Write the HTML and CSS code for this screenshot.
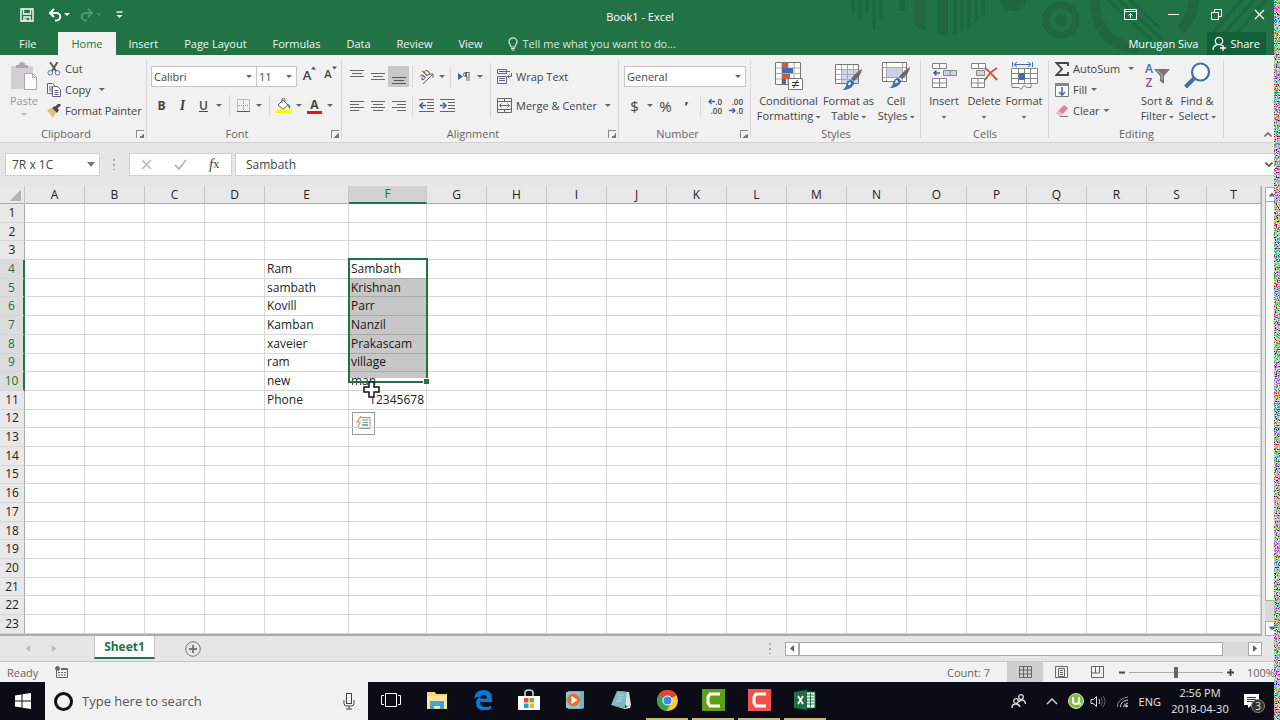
FILE: index.html
```html
<!DOCTYPE html>
<html lang="en">
<head>
<meta charset="UTF-8">
<meta name="viewport" content="width=device-width, initial-scale=1.0">
<title>Book1 - Excel</title>
<link rel="stylesheet" href="styles.css">
</head>
<body>
<div class="screen">

<header class="top">
    <svg class="deco" width="434" height="55" viewBox="0 0 434 55">
        <g stroke="#1e673f" fill="none">
            <path d="M13 0v15M20 0v21M27 0v13M34 0v30M41 0v18" stroke-width="3"/>
            <path d="M62 0v11" stroke-width="5"/>
            <path d="M115 0v34M122 0v32M129 0v28M136 0v22M143 0v15" stroke-width="3"/>
            <circle cx="221" cy="20" r="15" stroke-width="7"/>
            <path d="M255 0c0 28 14 46 42 48" stroke-width="10"/>
            <path d="M354 0c-1 14-6 22-14 30" stroke-width="10"/>
            <path d="M268 0l44 40M279 0l42 38M290 0l30 28M402 0l-30 34M414 0l-34 38M426 0l-30 34" stroke-width="3"/>
        </g>
        <g fill="#1e673f">
            <path d="M74 0h12v30q-9-1-12-7zM97 0h11v35q-8 1-11-2zM160 0h26q-2 11-13 11T160 0z"/>
            <circle cx="221" cy="20" r="6"/>
        </g>
    </svg>
    <div class="titlebar">
        <div class="quick">
            <button aria-label="Save"><svg width="14" height="14" viewBox="0 0 14 14" fill="none" stroke="#fff" stroke-width="1.4"><path d="M1 1h12v12H1zM3.500 1v5h7V1M4 13V9h6v4M6 10.500v2"/></svg></button>
            <button aria-label="Undo"><svg width="14" height="14" viewBox="0 0 14 14" fill="none" stroke="#fff" stroke-width="2"><path d="M2 5h6.500a3.700 3.700 0 0 1 0 7.500H7M6 1L2 5l4 4"/></svg></button>
            <i class="caret white"></i>
            <button class="off" aria-label="Redo"><svg width="14" height="14" viewBox="0 0 14 14" fill="none" stroke="#4f9a70" stroke-width="2"><path d="M12 5H5.500a3.700 3.700 0 0 0 0 7.500H7M8 1l4 4-4 4"/></svg></button>
            <i class="caret dim"></i>
            <button class="customize" aria-label="Customize"><svg width="7" height="8" viewBox="0 0 7 8"><path d="M0.500 1h6" stroke="#fff" stroke-width="1.300"/><path d="M0.500 4h6l-3 3z" fill="#fff"/></svg></button>
        </div>
        <span class="title">Book1 - Excel</span>
        <div class="winbtns">
            <button aria-label="Ribbon display"><svg width="13" height="11" viewBox="0 0 13 11" fill="none" stroke="#fff"><path d="M.5.5h12v10H.5zM.5 2.500h12M6.500 9V4.500M4.500 6.500l2-2 2 2"/></svg></button>
            <button aria-label="Minimize"><svg width="11" height="11" viewBox="0 0 11 11"><path d="M0 5.500h11" stroke="#fff"/></svg></button>
            <button aria-label="Restore"><svg width="11" height="11" viewBox="0 0 11 11" fill="none" stroke="#fff"><path d="M.5 3.500h7v7h-7zM3.500 3V.5h7v7H8"/></svg></button>
            <button aria-label="Close"><svg width="11" height="11" viewBox="0 0 11 11"><path d="M1 1l9 9M10 1l-9 9" stroke="#fff" stroke-width="1.200"/></svg></button>
        </div>
    </div>
    <nav class="tabs">
        <a href="#" class="file">File</a>
        <a href="#" class="active">Home</a>
        <a href="#">Insert</a>
        <a href="#">Page Layout</a>
        <a href="#">Formulas</a>
        <a href="#">Data</a>
        <a href="#">Review</a>
        <a href="#">View</a>
        <button class="tellme"><svg width="10" height="14" viewBox="0 0 10 14" fill="none" stroke="#d5eadf" stroke-width="1.200"><path d="M3 10C3 8 1 7 1 4.800a4 4 0 0 1 8 0C9 7 7 8 7 10zM3 11.500h4M3.500 13h3"/></svg>Tell me what you want to do...</button>
        <span class="user">Murugan Siva</span>
        <button class="share"><svg width="15" height="15" viewBox="0 0 15 15" fill="none" stroke="#fff" stroke-width="1.300"><circle cx="7" cy="5" r="3.700"/><path d="M1 14c0-3 2-5 5-5.300M8 8.500l2 1M11 9v6M8 12h6"/></svg>Share</button>
    </nav>
</header>

<section class="ribbon">
    <div class="group clipboard">
        <div class="body">
            <button class="big paste"><svg width="28" height="28" viewBox="0 0 28 28"><path d="M1 4h22v23H1z" fill="#d2d0d3"/><path d="M6 6V3h3a3 3 0 0 1 6 0h3v3z" fill="#aaa"/><path d="M14.500 11.500h8l4 4v12h-12z" fill="#fff" stroke="#aaa"/><path d="M22.500 11.500v4h4" fill="none" stroke="#aaa"/></svg><span>Paste</span><i class="caret pale"></i></button>
            <div class="stack">
                <button class="item"><svg width="14" height="14" viewBox="0 0 14 14" fill="none"><path d="M3 0l6 9M10.500 0L5 9" stroke="#555" stroke-width="1.800"/><circle cx="3.300" cy="10.800" r="2.300" stroke="#4a76b0"/><circle cx="10.500" cy="10.800" r="2.300" stroke="#4a76b0"/></svg>Cut</button>
                <button class="item"><svg width="14" height="14" viewBox="0 0 14 14" fill="#fff" stroke="#60637d"><path d="M.5.500h5l2 2v8h-7zM2 4h3M2 6h3M2 8h3"/><path d="M5.500 3.500h5l3 3v7h-8zM7.500 7.500h4M7.500 9.500h4M7.500 11.500h4"/></svg>Copy<i class="caret gap"></i></button>
                <button class="item"><svg width="14" height="14" viewBox="0 0 14 14"><path d="M0 6l5-2 4 4-3 6z" fill="#e5bd79"/><path d="M5 4l3-2 4 4-2 3z" fill="#4a4a4a"/><path d="M9 4l4-4" stroke="#4a4a4a" stroke-width="3"/></svg>Format Painter</button>
            </div>
        </div>
        <div class="label"><span>Clipboard</span><button class="launch" aria-label="Clipboard settings"></button></div>
    </div>

    <div class="group font">
        <div class="body rows">
            <div class="row">
                <button class="combo fontname">Calibri<i class="caret"></i></button>
                <button class="combo fontsize">11<i class="caret"></i></button>
                <button class="tool grow" aria-label="Increase font size"><b>A</b><svg width="5" height="4" viewBox="0 0 5 4"><path d="M0 3.500h5L2.500.5z" fill="#44546a"/></svg></button>
                <button class="tool shrink" aria-label="Decrease font size"><b>A</b><svg width="5" height="4" viewBox="0 0 5 4"><path d="M0 .5h5L2.500 3.500z" fill="#44546a"/></svg></button>
            </div>
            <div class="row">
                <button class="tool"><b>B</b></button>
                <button class="tool serif"><em>I</em></button>
                <button class="tool under"><u>U</u></button>
                <i class="caret"></i>
                <i class="sep"></i>
                <button class="tool" aria-label="Borders"><svg width="13" height="13" viewBox="0 0 13 13" fill="none" stroke="#8a8a8a"><path d="M.5.500h12v12H.500zM6.500 0v12M0 6.500h12" stroke-dasharray="1 1"/><path d="M0 12.500h13" stroke="#555"/></svg></button>
                <i class="caret"></i>
                <i class="sep"></i>
                <button class="tool" aria-label="Fill color"><svg width="16" height="15" viewBox="0 0 16 15"><path d="M2 7l5-5 5 5-5 4z" fill="#fff" stroke="#666"/><path d="M6 5V1q1.500-1.500 3 0v3" fill="none" stroke="#666"/><path d="M12 6q3 1 2 5-2-1-2-5z" fill="#4a76b0"/><path d="M0 12h15v3H0z" fill="#ff0"/></svg></button>
                <i class="caret"></i>
                <button class="tool fontcolor" aria-label="Font color"><b>A</b></button>
                <i class="caret"></i>
            </div>
        </div>
        <div class="label"><span>Font</span><button class="launch" aria-label="Font settings"></button></div>
    </div>

    <div class="group alignment">
        <div class="body">
            <div class="rows">
                <div class="row">
                    <button class="tool" aria-label="Top align"><svg width="14" height="14" viewBox="0 0 14 14" stroke="#666"><path d="M0 .5h14M2 3.500h10M0 6.500h14"/></svg></button>
                    <button class="tool" aria-label="Middle align"><svg width="14" height="14" viewBox="0 0 14 14" stroke="#666"><path d="M0 3.500h14M2 6.500h10M0 9.500h14"/></svg></button>
                    <button class="tool pressed" aria-label="Bottom align"><svg width="14" height="14" viewBox="0 0 14 14" stroke="#555"><path d="M0 7.500h14M2 10.500h10M0 13.500h14"/></svg></button>
                    <i class="sep"></i>
                    <button class="tool orient" aria-label="Orientation"><span>ab</span><svg width="16" height="16" viewBox="0 0 16 16" fill="none" stroke="#666"><path d="M4 15L14 5M10 5h4v4"/></svg></button>
                    <i class="caret"></i>
                    <i class="sep"></i>
                    <button class="tool" aria-label="Text direction"><svg width="13" height="10" viewBox="0 0 13 10"><path d="M0 1l5 3.500L0 8z" fill="#4a5fa5"/><path d="M11 .5H7.500a2 2 0 0 0 0 4H9v4.500M11 0v9" fill="none" stroke="#666"/><path d="M7 1h2v3H7z" fill="#666"/></svg></button>
                    <i class="caret"></i>
                </div>
                <div class="row">
                    <button class="tool" aria-label="Align left"><svg width="14" height="12" viewBox="0 0 14 12" stroke="#666"><path d="M0 1.500h14M0 4.500h9M0 7.500h14M0 10.500h9"/></svg></button>
                    <button class="tool" aria-label="Center"><svg width="14" height="12" viewBox="0 0 14 12" stroke="#666"><path d="M0 1.500h14M2 4.500h10M0 7.500h14M2 10.500h10"/></svg></button>
                    <button class="tool" aria-label="Align right"><svg width="14" height="12" viewBox="0 0 14 12" stroke="#666"><path d="M0 1.500h14M5 4.500h9M0 7.500h14M5 10.500h9"/></svg></button>
                    <i class="sep"></i>
                    <button class="tool" aria-label="Decrease indent"><svg width="15" height="13" viewBox="0 0 15 13" stroke="#666" fill="none"><path d="M0 .5h15M8 3.500h7M8 6.500h7M8 9.500h7M0 12.500h15"/><path d="M7 6.500H1M4 3.500l-3 3 3 3" stroke="#3f62a8" stroke-width="1.600"/></svg></button>
                    <button class="tool" aria-label="Increase indent"><svg width="15" height="13" viewBox="0 0 15 13" stroke="#666" fill="none"><path d="M0 .5h15M8 3.500h7M8 6.500h7M8 9.500h7M0 12.500h15"/><path d="M0 6.500h6M3 3.500l3 3-3 3" stroke="#3f62a8" stroke-width="1.600"/></svg></button>
                </div>
            </div>
            <i class="sep tall"></i>
            <div class="rows">
                <div class="row">
                    <button class="item"><svg width="15" height="15" viewBox="0 0 15 15" fill="none" stroke="#60637d"><path d="M.5.500h9v4h-9zM.5 7.500h9v7h-9zM2 2.500h11M2 9.500h6M2 11.500h6M14.500 4v3.500H10.500M12.500 5.500l-2 2 2 2"/></svg>Wrap Text</button>
                </div>
                <div class="row">
                    <button class="item"><svg width="15" height="15" viewBox="0 0 15 15" fill="none" stroke="#666"><path d="M.5.500h14v14H.500zM.5 3.500h14M.5 11.500h14M7.500 0v3.500M7.500 11.500V15M2.500 7.500h10M4.500 5.500l-2 2 2 2M10.500 5.500l2 2-2 2"/></svg>Merge &amp; Center<i class="caret gap"></i></button>
                </div>
            </div>
        </div>
        <div class="label"><span>Alignment</span><button class="launch" aria-label="Alignment settings"></button></div>
    </div>

    <div class="group number">
        <div class="body rows">
            <div class="row"><button class="combo format">General<i class="caret"></i></button></div>
            <div class="row">
                <button class="tool sign">$</button>
                <i class="caret"></i>
                <button class="tool sign">%</button>
                <button class="tool sign comma"><b>&#8217;</b></button>
                <i class="sep"></i>
                <button class="tool dec" aria-label="Increase decimal"><span><svg width="7" height="7" viewBox="0 0 7 7"><path d="M7 3.500H1M3.500 1L1 3.500 3.500 6" fill="none" stroke="#3f62a8" stroke-width="1.300"/></svg>.0</span><span>.00</span></button>
                <button class="tool dec" aria-label="Decrease decimal"><span>.00</span><span><svg width="7" height="7" viewBox="0 0 7 7"><path d="M0 3.500h6M3.500 1L6 3.500 3.500 6" fill="none" stroke="#3f62a8" stroke-width="1.300"/></svg>.0</span></button>
            </div>
        </div>
        <div class="label"><span>Number</span><button class="launch" aria-label="Number settings"></button></div>
    </div>

    <div class="group styles">
        <div class="body">
            <button class="big w65"><svg width="28" height="28" viewBox="0 0 28 28"><path d="M.5.500h25v22H.500z" fill="#fff" stroke="#777"/><path d="M7 1v21M13 1v21M19 1v21M1 6h24M1 11.500h24M1 17h24" stroke="#aaa"/><path d="M7 1h6v5H7zM7 12h8v5H7z" fill="#d2573c"/><path d="M7 6h11v5H7zM7 17h4v5H7z" fill="#3c6fb0"/><path d="M13.500 16.500h14v11h-14z" fill="#fff" stroke="#777"/><path d="M17 20.500h7M17 23.500h7M22.500 18l-4 8" stroke="#333"/></svg><span>Conditional<br>Formatting <i class="caret"></i></span></button>
            <button class="big w55"><svg width="28" height="28" viewBox="0 0 28 28"><path d="M.5 2.500h23v19H.500z" fill="#fff" stroke="#777"/><path d="M7 7h16v14H7z" fill="#cfd6e6"/><path d="M6.500 3v18M12.500 3v18M18.500 3v18M1 7.500h22M1 12.500h22M1 17.500h22" stroke="#aaa"/><path d="M27 7q-1 7-8 12l-3-2q5-7 11-10z" fill="#6b6b6b"/><path d="M15 18q4 0 4 4-3 6-12 6 4-2 4-5 1-4 4-5z" fill="#3c6fb0"/><path d="M14 20q2 0 2 2-2 2-3 1z" fill="#fff"/></svg><span>Format as<br>Table <i class="caret"></i></span></button>
            <button class="big w40"><svg width="28" height="28" viewBox="0 0 28 28"><path d="M.5.500h24v19H.500z" fill="#fff" stroke="#777"/><path d="M4.500 1v18M20.500 1v18M1 5.500h23M1 15.500h23" stroke="#aaa"/><path d="M5 6h15v9H5z" fill="#c9d2e8"/><path d="M28 5q-1 7-8 12l-3-2q5-7 11-10z" fill="#6b6b6b"/><path d="M15 16q4 0 4 4-3 6-12 6 4-2 4-5 1-4 4-5z" fill="#3c6fb0"/><path d="M14 18q2 0 2 2-2 2-3 1z" fill="#fff"/></svg><span>Cell<br>Styles <i class="caret"></i></span></button>
        </div>
        <div class="label"><span>Styles</span></div>
    </div>

    <div class="group cells">
        <div class="body">
            <button class="big w40"><svg width="28" height="28" viewBox="0 0 28 28" fill="#fff" stroke="#858585"><path d="M2.500 1.500h14v5h-14zM9.500 1.500v5M2.500 16.500h14v9h-14zM9.500 16.500v9M2.500 21h14"/><path d="M13.500 8.500h13v5h-13zM20 8.500v5" fill="#ccd3e8"/><path d="M10 11H4M6.500 8.500L4 11l2.500 2.500" fill="none" stroke="#3f62a8" stroke-width="1.600"/></svg><span>Insert<br><i class="caret"></i></span></button>
            <button class="big w40"><svg width="28" height="28" viewBox="0 0 28 28" fill="#fff" stroke="#858585"><path d="M1.500 1.500h14v5h-14zM8.500 1.500v5M1.500 16.500h13v9h-13zM8 16.500v9M1.500 21h13"/><path d="M6.500 8.500h8v5h-8z" fill="#ccd3e8"/><path d="M15 6q5 4 12 12M27 6q-7 4-12 12" fill="none" stroke="#dc5140" stroke-width="2"/></svg><span>Delete<br><i class="caret"></i></span></button>
            <button class="big w40"><svg width="28" height="28" viewBox="0 0 28 28" fill="none" stroke="#858585"><path d="M2.500 0v5M22.500 0v5M4 2.500h17M7 0L4 2.500 7 5M18 0l3 2.500L18 5" stroke="#3c6fb0"/><path d="M1.500 6.500h26v15h-26zM1.500 11.500h26M1.500 16.500h26M8.500 6.500v15M14.500 6.500v15M20.500 6.500v15" fill="#fff"/><path d="M9 11h6v7H9z" fill="#3c6fb0" stroke="none"/><path d="M2 21.500v4h7l2 2 3-4 3 2h4v-4"/></svg><span>Format<br><i class="caret"></i></span></button>
        </div>
        <div class="label"><span>Cells</span></div>
    </div>

    <div class="group editing">
        <div class="body">
            <div class="stack">
                <button class="item"><svg width="14" height="14" viewBox="0 0 14 14"><path d="M13 4V1H1.500l5.500 6-5.500 6H13v-3" fill="none" stroke="#444" stroke-width="1.800"/></svg>AutoSum<i class="caret gap"></i></button>
                <button class="item"><svg width="14" height="14" viewBox="0 0 14 14" fill="none"><path d="M.5.500h13v13H.500z" fill="#fff" stroke="#777"/><path d="M0 0h14v3H0z" fill="#888"/><path d="M7 4v8M4 9l3 3 3-3" stroke="#3c6fb0" stroke-width="1.600"/></svg>Fill<i class="caret near"></i></button>
                <button class="item"><svg width="14" height="14" viewBox="0 0 14 14"><path d="M3 7l6-6 4 3-5 6z" fill="#e87f9c"/><path d="M3 7l5 3-2 2H4L1 9z" fill="#f5b5c6"/><path d="M5 12.500h8" stroke="#777"/></svg>Clear<i class="caret near"></i></button>
            </div>
            <button class="big w40 sort"><span class="az"><b>A</b><b>Z</b></span><svg width="16" height="28" viewBox="0 0 16 28"><path d="M0 7h16l-6 7v8l-4-3v-5z" fill="#777"/><path d="M3 8l5 5v5" fill="none" stroke="#bbb"/></svg><span>Sort &amp;<br>Filter <i class="caret"></i></span></button>
            <button class="big w40"><svg width="28" height="28" viewBox="0 0 28 28" fill="none" stroke="#3c6fb0"><circle cx="17.500" cy="10" r="8.500" fill="#fff" stroke-width="2.200"/><path d="M11 16.500L2.500 25" stroke-width="4"/></svg><span>Find &amp;<br>Select <i class="caret"></i></span></button>
        </div>
        <div class="label"><span>Editing</span></div>
    </div>
    <button class="collapse" aria-label="Collapse the ribbon"><svg width="8" height="5" viewBox="0 0 8 5"><path d="M.5 4.500L4 1l3.500 3.500" fill="none" stroke="#555" stroke-width="1.400"/></svg></button>
</section>

<section class="formulabar">
    <button class="namebox">7R x 1C<i class="caret large"></i></button>
    <i class="grip"></i>
    <div class="fx">
        <button aria-label="Cancel"><svg width="11" height="11" viewBox="0 0 11 11"><path d="M1 1l9 9M10 1l-9 9" stroke="#bbb" stroke-width="1.600"/></svg></button>
        <button aria-label="Enter"><svg width="13" height="11" viewBox="0 0 13 11"><path d="M1 6l4 4 7-9" fill="none" stroke="#bbb" stroke-width="2"/></svg></button>
        <button class="fn"><em>f</em><small>x</small></button>
    </div>
    <input class="formula" type="text" value="Sambath" aria-label="Formula bar">
    <button class="expand" aria-label="Expand formula bar"><svg width="8" height="5" viewBox="0 0 8 5"><path d="M.5.500L4 4 7.500.500" fill="none" stroke="#555" stroke-width="1.600"/></svg></button>
</section>

<main class="sheet">
    <div class="gridwrap">
        <table id="grid"></table>
    </div>
    <div class="vscroll">
        <button aria-label="Scroll up"><i class="tri up"></i></button>
        <div class="thumb"></div>
        <div class="track"></div>
        <button aria-label="Scroll down"><i class="tri down"></i></button>
    </div>
</main>

<footer class="sheettabs">
    <button class="nav" aria-label="Previous sheet"><i class="tri left pale"></i></button>
    <button class="nav" aria-label="Next sheet"><i class="tri right pale"></i></button>
    <button class="sheettab">Sheet1</button>
    <button class="add" aria-label="New sheet"><svg width="16" height="16" viewBox="0 0 16 16" fill="none" stroke="#777"><circle cx="8" cy="8" r="7.300"/><path d="M8 4v8M4 8h8" stroke-width="1.800"/></svg></button>
    <i class="grip"></i>
    <div class="hscroll">
        <button aria-label="Scroll left"><i class="tri left"></i></button>
        <div class="thumb"></div>
        <div class="track"></div>
        <button aria-label="Scroll right"><i class="tri right"></i></button>
    </div>
</footer>

<div class="status">
    <span>Ready</span>
    <svg class="macro" width="13" height="12" viewBox="0 0 13 12" fill="none" stroke="#666"><path d="M1.500 4v7.500h11v-9H6"/><path d="M3 6.500h9M3 9h9" stroke-dasharray="2 1"/><path d="M6 3h6" stroke-width="2"/><circle cx="2.500" cy="2.500" r="2" fill="#666"/></svg>
    <span class="count">Count: 7</span>
    <button class="view on" aria-label="Normal"><svg width="13" height="12" viewBox="0 0 13 12" fill="none" stroke="#666"><path d="M.5.500h12v11H.500zM4.500 0v12M8.500 0v12M0 4h13M0 8h13"/></svg></button>
    <button class="view" aria-label="Page layout"><svg width="13" height="12" viewBox="0 0 13 12" fill="none" stroke="#666"><path d="M.5.500h12v11H.500zM3.500 2.500h6v8h-6zM5 4.500h3M5 6.500h3M5 8.500h3"/></svg></button>
    <button class="view" aria-label="Page break"><svg width="13" height="12" viewBox="0 0 13 12" fill="none" stroke="#666"><path d="M.5.500h12v11H.500zM4.500 0v7M8.500 0v7H.500"/></svg></button>
    <button class="zoombtn" aria-label="Zoom out"><svg width="7" height="7" viewBox="0 0 7 7"><path d="M0 3.500h6" stroke="#444" stroke-width="2"/></svg></button>
    <input class="zoom" type="range" min="10" max="190" value="100" aria-label="Zoom">
    <button class="zoombtn" aria-label="Zoom in"><svg width="7" height="7" viewBox="0 0 7 7"><path d="M0 3.500h7M3.500 0v7" stroke="#444" stroke-width="1.800"/></svg></button>
    <span class="pct">100%</span>
</div>

<div class="taskbar">
    <button class="start" aria-label="Start"><svg width="16" height="16" viewBox="0 0 16 16" fill="#fff"><path d="M0 2.500l6.500-1v6H0zM7.500 1.300L16 0v7.500H7.500zM0 8.500h6.500v6L0 13.500zM7.500 8.500H16V16l-8.500-1.200z"/></svg></button>
    <div class="search">
        <i class="cortana"></i>
        <input type="text" placeholder="Type here to search" aria-label="Search">
        <svg width="12" height="17" viewBox="0 0 12 17" fill="none" stroke="#444"><rect x="3.500" y=".5" width="5" height="10"/><path d="M1 7v3.500q0 2.500 3 2.500h4q3 0 3-2.500V7M6 13v3M3 16h6"/></svg>
    </div>
    <div class="apps">
        <button aria-label="Task view"><svg width="20" height="16" viewBox="0 0 20 16" fill="none" stroke="#fff"><path d="M4.500 1.500h11v13h-11zM3 3.500H.500v9H3M17 3.500h2.500v9H17"/></svg></button>
        <button aria-label="File Explorer"><svg width="22" height="20" viewBox="0 0 22 20"><path d="M1 2h8l1 2h11v15H1z" fill="#f4d780"/><path d="M1 6h20v12H1z" fill="#fbe69a"/><path d="M4 11h14v8h-4v-3H8v3H4z" fill="#42a5d8"/></svg></button>
        <button aria-label="Edge"><svg width="20" height="20" viewBox="0 0 20 20"><path d="M1 9Q2 0 10.500 0 19 0 19 9v3H7q0 5 6 5 3 0 5-1.500v3.500q-3 1.500-6.500 1.500Q3 20 3 13q0-4 4-6-5 0-6 2zM7.500 8.500H14Q14 5 10.500 5T7.500 8.500z" fill="#0a78d6"/></svg></button>
        <button aria-label="Store"><svg width="22" height="22" viewBox="0 0 22 22"><path d="M0 7h22v13q0 1-1 1H1q-1 0-1-1z" fill="#fff"/><path d="M7 7V4q0-3 4-3t4 3v3" fill="none" stroke="#ddd" stroke-width="1.500"/><path d="M6 9h4.500v4.500H6z" fill="#e5512c"/><path d="M11.500 9H16v4.500h-4.500z" fill="#7cb518"/><path d="M6 14.500h4.500V19H6z" fill="#219fd9"/><path d="M11.500 14.500H16V19h-4.500z" fill="#f6b70d"/></svg></button>
        <button aria-label="Media player"><svg width="20" height="20" viewBox="0 0 20 20"><path d="M3 1h16v17l-2 1H3z" fill="#74b0cc"/><path d="M1 2h14v16H1z" fill="#9cc3d5"/><circle cx="8.500" cy="10" r="6.500" fill="#e2742a"/><path d="M6.500 6l6 4-6 4z" fill="#fff"/></svg></button>
        <button aria-label="Notepad"><svg width="22" height="20" viewBox="0 0 22 20"><path d="M7 1l12 1 2 13-4 2z" fill="#d5e3e4"/><path d="M7 1l10 1-2 16L1 15z" fill="#7fb9c0"/><path d="M1 15l14 3 6-3-1 3-5 1z" fill="#e8eeee"/><path d="M8 5h6M7 8h6M6 11h6" stroke="#b7dde0"/></svg></button>
        <button class="open" aria-label="Chrome"><svg width="21" height="21" viewBox="0 0 21 21"><circle cx="10.500" cy="10.500" r="10.500" fill="#f5cc3a"/><path d="M10.500 10.500L1.400 5.200a10.500 10.500 0 0 1 18.200 0z" fill="#e04638"/><path d="M10.500 10.500L1.400 5.200A10.500 10.500 0 0 0 9.500 21l4-7z" fill="#35a353"/><circle cx="10.500" cy="10.500" r="5" fill="#fff"/><circle cx="10.500" cy="10.500" r="4" fill="#4583ee"/></svg></button>
        <button class="open" aria-label="Camtasia"><svg width="23" height="22" viewBox="0 0 23 22"><path d="M0 0h23v22H0z" fill="#5fa012"/><path d="M18 5H8L6 8v6l2 3h10" fill="none" stroke="#fff" stroke-width="3"/></svg></button>
        <button class="open" aria-label="Camtasia Recorder"><svg width="23" height="22" viewBox="0 0 23 22"><path d="M0 0h23v22H0z" fill="#f0514b"/><path d="M18 5H8L6 8v6l2 3h10" fill="none" stroke="#fff" stroke-width="3"/></svg></button>
        <button class="open" aria-label="Excel"><svg width="22" height="20" viewBox="0 0 22 20"><path d="M11 2h10v16H11z" fill="#fff" stroke="#1f7145"/><path d="M13 5h7M13 8h7M13 11h7M13 14h7M16.500 3v14" stroke="#1f7145"/><path d="M0 2l13-2v20L0 18z" fill="#1f7145"/><path d="M4 6l5 8M9 6l-5 8" stroke="#fff" stroke-width="1.800"/></svg></button>
    </div>
    <div class="tray">
        <svg width="15" height="15" viewBox="0 0 15 15" fill="none" stroke="#ddd" stroke-width="1.300"><circle cx="10" cy="3" r="2.300"/><circle cx="5" cy="7" r="2.300"/><path d="M1 14q0-4 4-4 3 0 4 3M8 8q1-2 3-2 3 0 3.500 4"/></svg>
        <svg class="chev" width="12" height="7" viewBox="0 0 12 7"><path d="M1 6l5-5 5 5" fill="none" stroke="#ddd" stroke-width="1.400"/></svg>
        <svg class="torrent" width="16" height="16" viewBox="0 0 16 16"><circle cx="8" cy="8" r="7.500" fill="#7cc142" stroke="#cfe5c0"/><path d="M5 4v4q0 3 3 3t3-3V4M11 9q0 2 2 2" fill="none" stroke="#fff" stroke-width="2"/></svg>
        <svg width="16" height="13" viewBox="0 0 16 13" fill="none" stroke="#ddd"><path d="M1 4.500h2.500l3-3v10l-3-3H1z"/><path d="M9 4q1.500 2.500 0 5"/><path d="M11 2.500q3 4 0 8M13 1q4 5.500 0 11" stroke="#666"/></svg>
        <svg width="13" height="13" viewBox="0 0 13 13" fill="none" stroke="#ccc"><path d="M7.500 12q0-3 4.500-4M4.500 12q0-6 7.500-7"/><path d="M1.500 12Q1 4 12 2" stroke="#888"/><circle cx="10.500" cy="11" r="1" fill="#ccc"/></svg>
        <span class="lang">ENG</span>
        <div class="clock">2:56 PM<br>2018-04-30</div>
        <div class="notif"><svg width="16" height="16" viewBox="0 0 16 16"><path d="M0 1h15v11H8l-4 3v-3H0z" fill="#fff"/><path d="M3 4.500h9M3 6.500h9M3 8.500h6" stroke="#333"/></svg><span class="badge">3</span></div>
    </div>
</div>
</div>

<svg class="noise" aria-hidden="true">
    <filter id="static" x="0" y="0" width="100%" height="100%">
        <feTurbulence type="fractalNoise" baseFrequency="0.83" numOctaves="3" seed="4"/>
        <feColorMatrix values="3 0 0 0 -1  0 3 0 0 -1  0 0 3 0 -1  0 0 0 0 1"/>
    </filter>
    <rect width="100%" height="100%" filter="url(#static)"/>
</svg>

<script>
    const cols = 'ABCDEFGHIJKLMNOPQRST'.split('');
    const data = {
        E4: 'Ram', E5: 'sambath', E6: 'Kovill', E7: 'Kamban', E8: 'xaveier', E9: 'ram', E10: 'new', E11: 'Phone',
        F4: 'Sambath', F5: 'Krishnan', F6: 'Parr', F7: 'Nanzil', F8: 'Prakascam', F9: 'village', F10: 'man', F11: '12345678'
    };

    let html = '<colgroup><col class="rowhead">';
    cols.forEach(c => {
        html += '<col class="' + (c === 'E' ? 'c84' : c === 'F' ? 'c78' : c === 'T' ? '' : 'c60') + '">';
    });
    html += '</colgroup><thead><tr><th class="corner"></th>';
    cols.forEach(c => html += '<th' + (c === 'F' ? ' class="sel"' : '') + '>' + c + '</th>');
    html += '</tr></thead><tbody>';

    for (let r = 1; r <= 23; r++) {
        html += '<tr><th' + (r >= 4 && r <= 10 ? ' class="sel"' : '') + '>' + r + '</th>';
        cols.forEach(c => {
            const id = c + r;
            const num = data[id] && !isNaN(data[id]);
            html += '<td' + (num ? ' class="num"' : '') + '>' + (data[id] || '');
            // selection frame, mouse pointer and quick analysis button hang off these cells
            if (id === 'F4') html += '<div class="selection"><i class="handle"></i></div>';
            if (id === 'F10') html += '<svg class="cursor" width="17" height="17" viewBox="0 0 17 17"><path d="M6 1h5v5h5v5h-5v5H6v-5H1V6h5z" fill="#fff" stroke="#111" stroke-width="1.500"/></svg>';
            if (id === 'F11') html += '<button class="quickbtn" aria-label="Quick analysis"><svg width="15" height="14" viewBox="0 0 15 14" fill="none"><path d="M4 1.500h10v11H3" stroke="#999"/><path d="M6 4h6M7 6.500h5" stroke="#888"/><path d="M6 9h6" stroke="#3aa79b" stroke-width="1.500"/><path d="M5 0L1 6h3l-2 5" stroke="#eba078" stroke-width="1.500"/></svg></button>';
            html += '</td>';
        });
        html += '</tr>';
    }
    document.getElementById('grid').innerHTML = html + '</tbody>';
</script>
</body>
</html>
```
FILE: styles.css
```css
* {
    box-sizing: border-box;
}
body {
    margin: 0;
    height: 100vh;
    display: flex;
    overflow: hidden;
    font-family: "Open Sans", "Noto Sans", sans-serif;
    font-size: 11px;
    color: #444;
}
button {
    font: inherit;
    color: inherit;
    background: none;
    border: 0;
    padding: 0;
    margin: 0;
    display: flex;
    align-items: center;
    justify-content: center;
    white-space: nowrap;
}
input {
    font: inherit;
    color: inherit;
    border: 0;
    padding: 0;
    margin: 0;
    min-width: 0;
}
svg {
    display: block;
    flex: none;
}
.screen {
    flex: 1;
    min-width: 0;
    display: flex;
    flex-direction: column;
    overflow: hidden;
    background: #e6e6e6;
}
.noise {
    width: 6px;
    height: 100%;
}

/* small arrows */
.caret {
    width: 10px;
    height: 3px;
    flex: none;
    display: inline-block;
    background: #666;
    clip-path: polygon(20% 0, 80% 0, 50% 100%);
}
.caret.white { background: #fff; }
.caret.dim { background: #3f8a61; }
.caret.pale { background: #bbb; }
.caret.gap { margin-left: 2px; }
.caret.near { margin-left: -2px; }
.caret.large {
    height: 5px;
    clip-path: polygon(10% 0, 90% 0, 50% 100%);
}
.tri {
    width: 7px;
    height: 7px;
    background: #666;
}
.tri.up { clip-path: polygon(0 80%, 100% 80%, 50% 20%); }
.tri.down { clip-path: polygon(0 20%, 100% 20%, 50% 80%); }
.tri.left { clip-path: polygon(80% 0, 80% 100%, 20% 50%); }
.tri.right { clip-path: polygon(20% 0, 20% 100%, 80% 50%); }
.tri.pale { background: #bbb; }

/* title bar */
.top {
    position: relative;
    background: #217346;
    color: #fff;
}
.deco {
    position: absolute;
    right: 0;
    top: 0;
}
.titlebar {
    position: relative;
    height: 32px;
    display: flex;
    align-items: center;
    justify-content: space-between;
    padding-bottom: 3px;
}
.quick {
    display: flex;
    align-items: center;
    flex: 1;
    padding-left: 20px;
}
.quick .off { margin-left: 8px; }
.quick button + button { margin-left: 14px; }
.quick .customize { margin-left: 12px; }
.title {
    padding: 3px 14px 0 0;
}
.winbtns {
    flex: 1;
    display: flex;
    justify-content: flex-end;
}
.winbtns button {
    width: 43px;
}
.winbtns button:last-child {
    margin-right: -7px;
}
.tabs {
    position: relative;
    height: 23px;
    display: flex;
    align-items: stretch;
}
.tabs a {
    color: #f0f6f2;
    text-decoration: none;
    padding: 0 13px;
    line-height: 23px;
}
.tabs .file { padding: 0 22px 0 19px; }
.tabs .active {
    background: #f1f1f1;
    color: #217346;
}
.tellme {
    margin-left: 12px;
    gap: 5px;
    color: #d5eadf;
}
.user {
    margin-left: auto;
    line-height: 23px;
}
.share {
    background: #12603a;
    margin: 0 8px 0 9px;
    padding: 0 6px 0 5px;
    gap: 3px;
}

/* ribbon */
.ribbon {
    display: flex;
    background: #f1f1f1;
    border-bottom: 1px solid #d2d2d2;
}
.group {
    display: flex;
    flex-direction: column;
    padding-top: 3px;
    flex: none;
    position: relative;
}
.group::after {
    content: "";
    position: absolute;
    right: 0;
    top: 5px;
    bottom: 4px;
    width: 1px;
    background: #d8d8d8;
}
.clipboard { width: 147px; }
.font { width: 195px; }
.alignment { width: 277px; }
.number { width: 132px; }
.styles { width: 170px; }
.cells { width: 128px; }
.editing { width: 175px; }
.body {
    display: flex;
    height: 67px;
    padding-left: 4px;
}
.styles .body { padding-left: 5px; }
.cells .body { padding-left: 3px; }
.label {
    display: flex;
    height: 17px;
    line-height: 17px;
    text-align: center;
    color: #666;
}
.label span {
    flex: 1;
}
.launch {
    width: 8px;
    height: 8px;
    margin: 5px 3px 0 4px;
    border: 1px solid #888;
    border-right: 0;
    border-bottom: 0;
    background: linear-gradient(135deg, transparent 50%, #777 50%) 2px 2px / 5px 5px no-repeat;
}
.rows {
    display: flex;
    flex-direction: column;
    padding-top: 4px;
}
.body.rows { padding-left: 4px; }
.number .body.rows { padding-left: 5px; }
.row {
    display: flex;
    align-items: center;
    height: 29px;
}
.stack {
    display: flex;
    flex-direction: column;
}
.item {
    height: 21px;
    gap: 4px;
    justify-content: flex-start;
}
.tool {
    width: 21px;
    height: 21px;
    flex: none;
    font-size: 12px;
}
.tool.serif {
    font-family: "Liberation Serif", serif;
    font-size: 14px;
    font-weight: bold;
}
.under { font-weight: 600; }
.pressed { background: #c8c8c8; }
.sep {
    width: 1px;
    height: 22px;
    background: #dadada;
    margin: 0 3px 0 5px;
}
.alignment .sep { margin: 0 3px; }
.alignment .sep.tall {
    height: 56px;
    margin: 5px 6px 0 5px;
}
.combo {
    height: 21px;
    background: #fff;
    border: 1px solid #c6c6c6;
    padding: 0 2px;
    justify-content: space-between;
}
.fontname { width: 106px; }
.fontsize {
    width: 41px;
    margin-left: -1px;
}
.format { width: 122px; }
.grow, .shrink {
    align-items: flex-start;
}
.grow {
    margin-left: 2px;
    font-size: 13px;
}
.shrink { font-size: 11px; }
.grow b, .shrink b { font-weight: 600; }
.fontcolor b {
    line-height: 13px;
    border-bottom: 3px solid #e11;
    padding: 0 3px;
}
.orient { position: relative; }
.orient span {
    position: absolute;
    left: 2px;
    top: 1px;
    font-size: 10px;
    line-height: 14px;
    rotate: -45deg;
}
.sign { font-size: 15px; }
.dec {
    flex-direction: column;
    align-items: flex-end;
    padding-right: 3px;
    font-size: 8px;
    line-height: 9px;
    font-weight: 600;
}
.dec span {
    display: flex;
    align-items: center;
}
.number .sep { margin: 0 3px; }
.big {
    flex-direction: column;
    justify-content: flex-start;
    padding-top: 4px;
    line-height: 15px;
    text-align: center;
}
.big svg { margin-bottom: 3px; }
.big .caret {
    vertical-align: middle;
    margin: 0 -3px;
}
.w65 { width: 65px; }
.w55 { width: 55px; }
.w40 { width: 40px; }
.clipboard .paste {
    width: 38px;
    margin-right: 4px;
    color: #999;
}
.clipboard .body { padding-left: 5px; }
.big.paste .caret { margin: 5px 0 0; }
.editing .stack { width: 82px; }
.editing .body { padding-left: 6px; }
.sort {
    flex-direction: row;
    flex-wrap: wrap;
    align-content: flex-start;
    justify-content: center;
}
.az {
    width: 10px;
    height: 28px;
    margin-bottom: 3px;
    font-size: 12px;
    line-height: 14px;
    color: #3c6fb0;
}
.az b {
    display: block;
    font-weight: 600;
}
.az b + b { color: #8a4fb5; }
.collapse {
    margin: auto 2px 5px auto;
}

/* formula bar */
.formulabar {
    display: flex;
    height: 43px;
    padding: 10px 0 10px 5px;
    font-size: 12px;
}
.namebox {
    width: 95px;
    padding: 0 3px 0 6px;
    justify-content: space-between;
    background: #fff;
    border: 1px solid #d0d0d0;
}
.namebox .caret { background: #777; }
.grip {
    width: 2px;
    height: 11px;
    margin: 6px 14px 6px 13px;
    background: repeating-linear-gradient(#aaa 0 2px, transparent 2px 5px);
}
.fx {
    display: flex;
    width: 103px;
    background: #fff;
    border: 1px solid #d0d0d0;
}
.fx button { flex: 1; }
.fn {
    font-family: "Liberation Serif", serif;
    font-size: 15px;
}
.fn small { font-size: 12px; }
.formula {
    flex: 1;
    margin-left: 3px;
    padding-left: 10px;
    background: #fff;
    border: 1px solid #d0d0d0;
    border-right: 0;
}
.expand {
    width: 10px;
    background: #fff;
    border: 1px solid #d0d0d0;
    border-width: 1px 0;
}

/* sheet */
.sheet {
    flex: 1;
    min-height: 0;
    display: flex;
}
.gridwrap {
    flex: 1;
    min-width: 0;
    overflow: hidden;
    border-right: 1px solid #ababab;
    border-bottom: 2px solid #ababab;
}
table {
    width: 100%;
    height: 100%;
    table-layout: fixed;
    border-collapse: separate;
    border-spacing: 0;
    background: #fff;
    font-size: 12px;
    color: #222;
}
.rowhead { width: 25px; }
.c60 { width: 60px; }
.c78 { width: 78px; }
.c84 { width: 84px; }
th, td {
    padding: 0;
    line-height: 16px;
    white-space: nowrap;
    border-right: 1px solid #d6d6d6;
    border-bottom: 1px solid #d6d6d6;
}
th {
    background: #e8e8e8;
    font-weight: normal;
    border-right-color: #c6c6c6;
}
thead tr { height: 18px; }
thead th {
    border-bottom-color: #ababab;
}
thead .sel {
    background: #d2d2d2;
    color: #217346;
    border-bottom: 2px solid #217346;
}
tbody th { border-right-color: #ababab; }
tbody .sel {
    background: #dcdcdc;
    color: #217346;
    border-right: 2px solid #217346;
}
.corner {
    background: linear-gradient(135deg, transparent 50%, #b5b5b5 50%) 10px 4px / 11px 11px no-repeat #e8e8e8;
}
td {
    position: relative;
    padding-left: 2px;
}
.num {
    text-align: right;
    padding-right: 2px;
}
.selection {
    position: absolute;
    z-index: 1;
    left: -1px;
    right: -2px;
    top: -2px;
    height: 125px;
    border: 2px solid #217346;
    background: linear-gradient(transparent 18px, rgba(0, 0, 0, 0.22) 18px, rgba(0, 0, 0, 0.22) 118px, transparent 118px);
}
.handle {
    position: absolute;
    right: -3px;
    bottom: -3px;
    width: 5px;
    height: 5px;
    background: #217346;
    outline: 1px solid #fff;
}
.cursor {
    position: absolute;
    z-index: 2;
    left: 14px;
    top: 9px;
}
.quickbtn {
    position: absolute;
    left: 3px;
    top: 21px;
    width: 23px;
    height: 23px;
    background: #fff;
    border: 1px solid #9a9a9a;
}
.vscroll {
    width: 9px;
    margin-left: 3px;
    padding-top: 1px;
    display: flex;
    flex-direction: column;
    overflow: hidden;
}
.vscroll button {
    width: 14px;
    height: 15px;
    background: #fff;
    border: 1px solid #ababab;
}
.vscroll .thumb {
    width: 14px;
    flex: 1;
    background: #fff;
    border: 1px solid #ababab;
    border-top: 0;
}
.vscroll .track {
    height: 20px;
    background: #d8d8d8;
}

/* sheet tabs */
.sheettabs {
    display: flex;
    align-items: center;
    height: 26px;
    border-bottom: 1px solid #c6c6c6;
    padding: 0 12px 0 15px;
}
.nav {
    width: 26px;
}
.sheettab {
    align-self: flex-start;
    width: 61px;
    height: 23px;
    margin-left: 27px;
    background: #fff;
    border: 1px solid #c6c6c6;
    border-top: 0;
    border-bottom: 2px solid #217346;
    font-size: 12px;
    font-weight: bold;
    color: #217346;
}
.add { margin-left: 30px; }
.sheettabs .grip { margin: 0 14px 0 auto; }
.hscroll {
    display: flex;
    width: 477px;
    height: 14px;
}
.hscroll button {
    width: 14px;
    background: #fff;
    border: 1px solid #ababab;
}
.hscroll .thumb {
    flex: 1;
    background: #fff;
    border: 1px solid #ababab;
}
.hscroll .track {
    width: 25px;
    background: #dadada;
}

/* status bar */
.status {
    display: flex;
    align-items: center;
    height: 20px;
    padding-left: 7px;
    background: #f1f1f1;
    color: #666;
}
.macro { margin-left: 17px; }
.count { margin: 0 17px 0 auto; }
.view {
    width: 36px;
    height: 20px;
}
.view.on { background: #cfcfcf; }
.zoombtn {
    width: 14px;
    height: 14px;
}
.zoom {
    width: 94px;
    height: 12px;
    appearance: none;
    background: linear-gradient(#aaa, #aaa) 0 50% / 100% 1px no-repeat;
}
.zoom::-webkit-slider-thumb {
    appearance: none;
    width: 4px;
    height: 11px;
    background: #666;
}
.pct {
    width: 27px;
    margin-left: 10px;
}

/* taskbar */
.taskbar {
    display: flex;
    height: 38px;
    background: #0b0c15;
    color: #e8e8e8;
}
.start { width: 45px; }
.search {
    display: flex;
    align-items: center;
    width: 323px;
    padding: 0 13px 0 9px;
    background: #f1f1f1;
}
.cortana {
    width: 19px;
    height: 19px;
    border: 3px solid #111;
    border-radius: 50%;
}
.search input {
    flex: 1;
    margin-left: 9px;
    background: none;
    font-size: 13px;
}
.search input::placeholder { color: #555; }
.apps { display: flex; }
.apps button {
    width: 46px;
    border-bottom: 2px solid transparent;
    background-clip: padding-box;
}
.apps .open {
    border-image: linear-gradient(90deg, transparent 4px, #c9b983 4px, #c9b983 42px, transparent 42px) 2;
}
.tray {
    display: flex;
    align-items: center;
    margin-left: auto;
    gap: 10px;
}
.tray .chev { margin-left: 10px; }
.tray .torrent { margin-right: -4px; }
.clock {
    width: 58px;
    text-align: center;
    line-height: 16px;
}
.notif {
    position: relative;
    width: 35px;
    padding-left: 5px;
}
.badge {
    position: absolute;
    left: 12px;
    top: 6px;
    width: 14px;
    height: 14px;
    border-radius: 50%;
    background: #333;
    border: 1px solid #888;
    font-size: 10px;
    line-height: 12px;
    text-align: center;
}
```
